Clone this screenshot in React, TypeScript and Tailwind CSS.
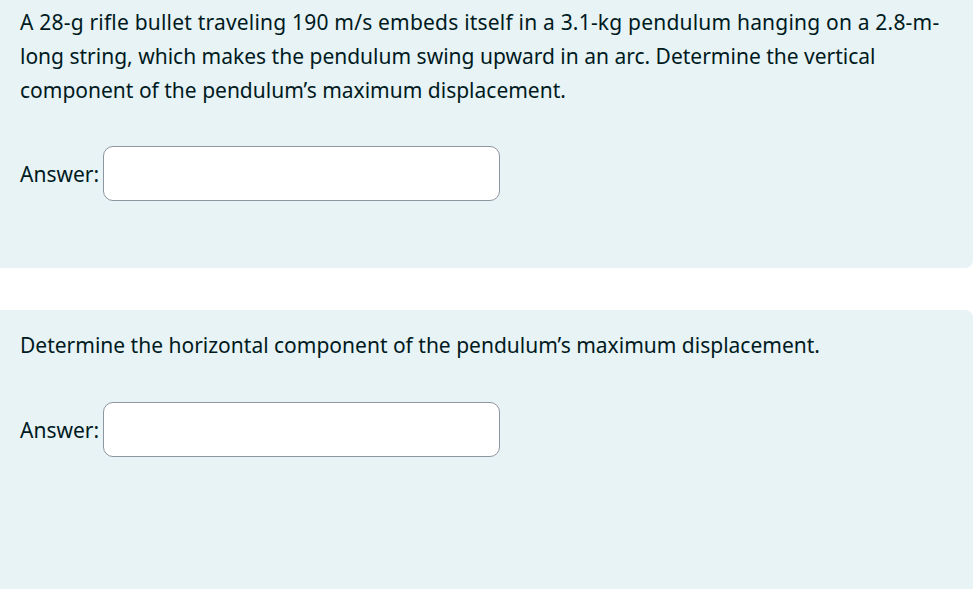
export default function App() {
  return (
    <div className="min-h-[589px] w-[973px] overflow-hidden bg-white text-[#001a1e] font-['Noto_Sans','Liberation_Sans',sans-serif] text-[21px] leading-[34px] tracking-[0.2px]">
      <div className="h-[268px] rounded-br-lg bg-[#e7f3f5] pl-5 pt-[5px]">
        <p>
          A 28-g rifle bullet traveling 190 m/s embeds itself in a 3.1-kg pendulum hanging on a 2.8-m-
          <br />
          <span className="tracking-[0px]">long string, which makes the pendulum swing upward in an arc. Determine the vertical</span>
          <br />
          <span className="tracking-[0px]">component of the pendulum’s maximum displacement.</span>
        </p>
        <div className="mt-[39px] flex items-center gap-[4px]">
          <span className="tracking-[0px]">Answer:</span>
          <div className="h-[55px] w-[397px] rounded-[10px] border border-[#8f959e] bg-white" />
        </div>
      </div>
      <div className="mt-[42px] h-[279px] rounded-tr-lg bg-[#e7f3f5] pl-5 pt-[18px]">
        <p className="tracking-[0px]">Determine the horizontal component of the pendulum’s maximum displacement.</p>
        <div className="mt-10 flex items-center gap-[4px]">
          <span className="tracking-[0px]">Answer:</span>
          <div className="h-[55px] w-[397px] rounded-[10px] border border-[#8f959e] bg-white" />
        </div>
      </div>
    </div>
  )
}
